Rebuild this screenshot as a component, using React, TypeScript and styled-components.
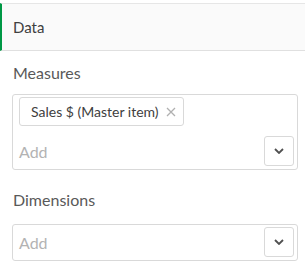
import styled, { createGlobalStyle } from "styled-components";

const GlobalStyle = createGlobalStyle`
  body {
    margin: 0;
    background: #ffffff;
    font-family: Lato, "Open Sans", sans-serif;
    color: #404040;
  }
`;

export default function App() {
  return (
    <Panel>
      <GlobalStyle />
      <Header>Data</Header>
      <Section $top={12}>
        <Label $gap={11}>Measures</Label>
        <Field>
          <Chips>
            <Chip>
              Sales $ (Master item)
              <RemoveIcon viewBox="0 0 10 10">
                <path d="M1 1 L9 9 M9 1 L1 9" />
              </RemoveIcon>
            </Chip>
          </Chips>
          <AddRow>
            <Placeholder>Add</Placeholder>
            <DropButton>
              <Chevron />
            </DropButton>
          </AddRow>
        </Field>
      </Section>
      <Section $top={20}>
        <Label $gap={14}>Dimensions</Label>
        <Field>
          <AddRow>
            <Placeholder>Add</Placeholder>
            <DropButton>
              <Chevron />
            </DropButton>
          </AddRow>
        </Field>
      </Section>
    </Panel>
  );
}

function Chevron() {
  return (
    <ChevronSvg viewBox="0 0 10 6">
      <path d="M1 1 L5 5 L9 1" />
    </ChevronSvg>
  );
}

const Panel = styled.div`
  width: 305px;
  padding-top: 3px;
`;

const Header = styled.div`
  height: 46px;
  display: flex;
  align-items: center;
  padding-left: 11px;
  background: #fafafa;
  border-top: 1px solid #e6e6e6;
  border-bottom: 1px solid #e0e0e0;
  border-left: 2px solid #009845;
  font-size: 15px;
  color: #404040;
`;

const Section = styled.div<{ $top: number }>`
  padding: ${(p) => p.$top}px 7px 0 12px;
  display: flex;
  flex-direction: column;
`;

const Label = styled.div<{ $gap: number }>`
  font-size: 16px;
  line-height: 20px;
  padding-left: 1px;
  margin-bottom: ${(p) => p.$gap}px;
  color: #595959;
`;

const Field = styled.div`
  border: 1px solid #d9d9d9;
  border-radius: 3px;
  padding: 2px 3px 3px 6px;
  display: flex;
  flex-direction: column;
`;

const Chips = styled.div`
  display: flex;
  flex-wrap: wrap;
  gap: 4px;
  margin-bottom: 10px;
`;

const Chip = styled.div`
  height: 27px;
  display: flex;
  align-items: center;
  gap: 7px;
  padding: 0 7px 0 11px;
  border: 1px solid #d9d9d9;
  border-radius: 3px;
  font-size: 14px;
  color: #404040;
  align-self: flex-start;
`;

const RemoveIcon = styled.svg`
  width: 10px;
  height: 10px;
  stroke: #b0b0b0;
  stroke-width: 1.3;
  fill: none;
`;

const AddRow = styled.div`
  display: flex;
  align-items: center;
  justify-content: space-between;
`;

const Placeholder = styled.div`
  font-size: 16px;
  color: #b3b3b3;
`;

const DropButton = styled.div`
  width: 28px;
  height: 28px;
  display: flex;
  align-items: center;
  justify-content: center;
  border: 1px solid #d9d9d9;
  border-radius: 3px;
  background: #ffffff;
`;

const ChevronSvg = styled.svg`
  width: 10px;
  height: 6px;
  stroke: #505050;
  stroke-width: 1.8;
  fill: none;
`;
